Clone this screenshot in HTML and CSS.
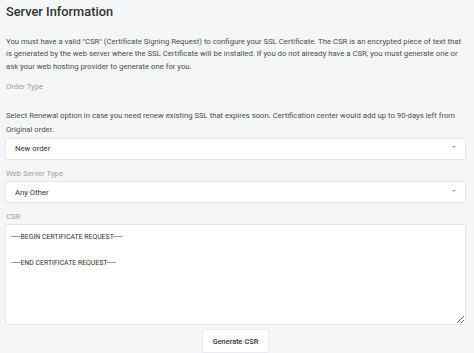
FILE: index.html
```html
<!DOCTYPE html>
<html lang="en">
<head>
    <meta charset="UTF-8">
    <meta name="viewport" content="width=device-width, initial-scale=1.0">
    <title>Server Information</title>
    <link rel="stylesheet" href="styles.css">
</head>
<body>

<div class="container">
    <h1>Server Information</h1>

    <p class="intro">You must have a valid "CSR" (Certificate Signing Request) to configure your SSL Certificate. The CSR is an encrypted piece of text that is generated by the web server where the SSL Certificate will be installed. If you do not already have a CSR, you must generate one or<br>ask your web hosting provider to generate one for you.</p>

    <label class="field-label order-label">Order Type</label>
    <p class="hint">Select Renewal option in case you need renew existing SSL that expires soon. Certification center would add up to 90-days left from Original order.</p>
    <div class="select-wrap">
        <select id="orderType">
            <option>New order</option>
            <option>Renewal</option>
        </select>
    </div>

    <label class="field-label">Web Server Type</label>
    <div class="select-wrap">
        <select id="serverType">
            <option>Any Other</option>
            <option>Apache</option>
            <option>Nginx</option>
            <option>IIS</option>
        </select>
    </div>

    <label class="field-label">CSR</label>
    <textarea id="csr">-----BEGIN CERTIFICATE REQUEST-----

-----END CERTIFICATE REQUEST-----</textarea>

    <div class="actions">
        <button id="generateButton">Generate CSR</button>
    </div>
</div>

</body>
</html>
```

FILE: styles.css
```css
body {
    font-family: Roboto, "Liberation Sans", Arial, sans-serif;
    margin: 0;
    padding: 0;
    background-color: #f5f6f8;
    color: #4d4d4d;
}
.container {
    padding: 0 8px 0 5px;
}
h1 {
    font-size: 12.8px;
    font-weight: 500;
    color: #333;
    margin: 0;
    padding: 2px 0 0 1px;
    line-height: 20px;
}
.intro {
    font-size: 7.72px;
    line-height: 12.4px;
    margin: 14px 2px 0 1px;
}
.field-label {
    display: block;
    font-size: 7.72px;
    line-height: 12px;
    color: #a0a0a0;
    margin: 8px 0 0 1px;
}
.hint {
    font-size: 7.72px;
    line-height: 13.5px;
    margin: 16px 0 0 1px;
}
.select-wrap {
    position: relative;
    margin-top: 0;
}
.select-wrap::after {
    content: "";
    position: absolute;
    right: 10px;
    top: 10px;
    border-left: 2px solid transparent;
    border-right: 2px solid transparent;
    border-top: 2px solid #aaa;
}
select {
    -webkit-appearance: none;
    appearance: none;
    width: 100%;
    height: 22px;
    padding: 0 9px;
    font-family: inherit;
    font-size: 7.72px;
    color: #333;
    background-color: #fff;
    border: 1px solid #e6e7ea;
    border-radius: 1px;
    outline: none;
}
textarea {
    display: block;
    width: 100%;
    box-sizing: border-box;
    height: 101px;
    margin-top: 1px;
    padding: 6px 5px;
    font-family: inherit;
    font-size: 6.9px;
    line-height: 12.8px;
    color: #333;
    background-color: #fff;
    border: 1px solid #e6e7ea;
    border-radius: 1px;
    resize: vertical;
    outline: none;
}
.actions {
    display: flex;
    justify-content: center;
    margin-top: 4px;
}
#generateButton {
    padding: 0 10px;
    height: 24px;
    font-family: inherit;
    font-size: 7.4px;
    font-weight: 500;
    color: #333;
    background-color: #fff;
    border: 1px solid #ebecef;
    border-radius: 1px;
    cursor: pointer;
}
#generateButton:hover {
    background-color: #f0f0f0;
}
```
